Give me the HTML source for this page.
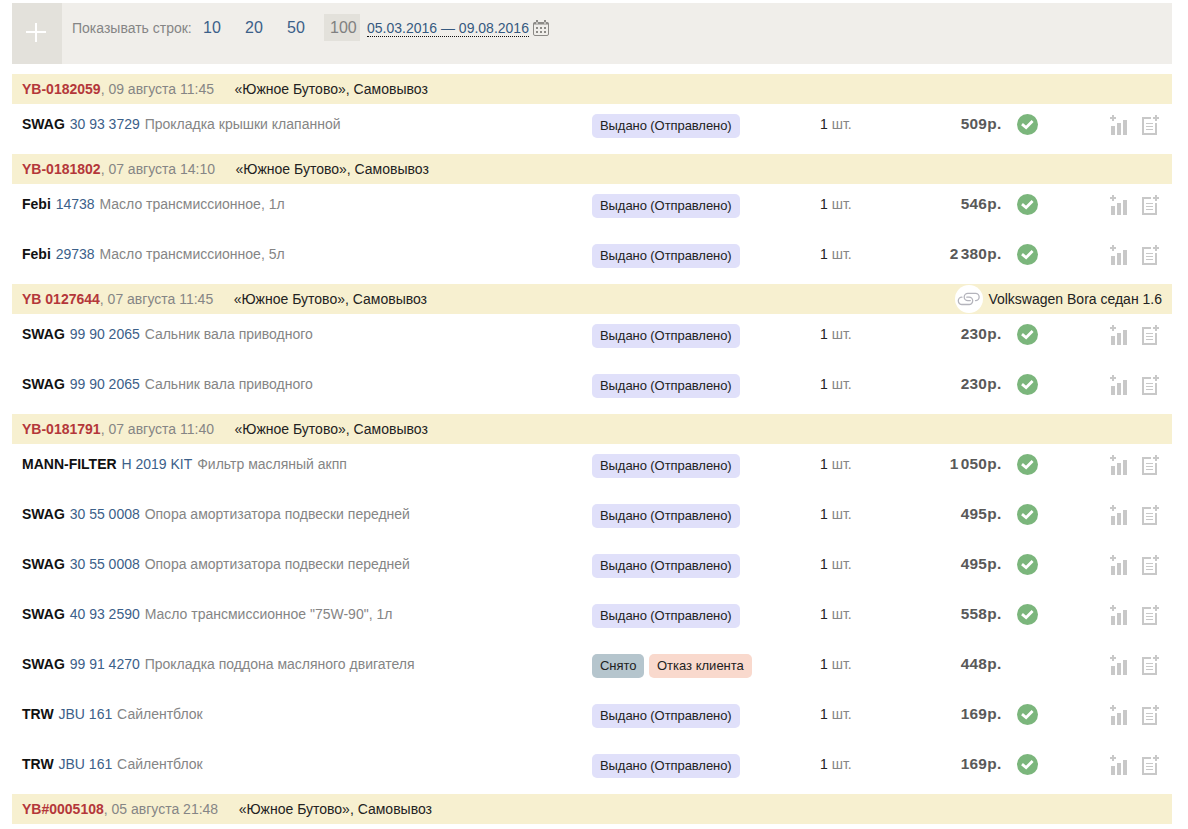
<!DOCTYPE html><html lang="ru"><head><meta charset="utf-8"><title>Заказы</title><style>
*{box-sizing:border-box;margin:0;padding:0}
html,body{width:1188px;height:829px;overflow:hidden;background:#fff}
body{font-family:"Liberation Sans",Arial,sans-serif;font-size:14px;color:#222;position:relative}
.top{position:absolute;left:12px;top:3px;width:1160px;height:61px;background:#f0eeea}
.plus{position:absolute;left:0;top:0;width:50px;height:61px;background:#e3e1db}
.plus:before{content:"";position:absolute;left:14px;top:28px;width:20px;height:2px;background:#fff}
.plus:after{content:"";position:absolute;left:23px;top:20px;width:2px;height:19px;background:#fff}
.top .lbl{position:absolute;left:60px;top:17px;font-size:14px;color:#858585}
.top .n{position:absolute;top:16px;font-size:16px;color:#3b6089}
.top .cur{position:absolute;left:312px;top:11px;width:36px;height:27px;background:#e3e1db}
.top .cur span{position:absolute;left:6px;top:5px;font-size:16px;color:#808080}
.top .dt{position:absolute;left:355px;top:17px;font-size:14px;color:#36597f;border-bottom:1px dotted #111;line-height:16px;white-space:nowrap}
.top svg{position:absolute;left:521px;top:17px}
.g{position:absolute;left:12px;width:1160px;height:30px;background:#f7f0d0;white-space:nowrap}
.g .t{position:absolute;left:10px;top:7px;font-size:14px;color:#858585}
.g .t b{color:#b4373a;font-weight:bold}
.g .t i{font-style:normal;color:#222;margin-left:20.5px}
.g .car{position:absolute;right:10px;top:7px;font-size:14px;color:#222}
.g .lnk{position:absolute;left:943px;top:1px;width:28px;height:28px;border-radius:50%;background:#fff}
.r{position:absolute;left:12px;width:1160px;height:50px;white-space:nowrap}
.r .d{position:absolute;left:10px;top:12px;font-size:14px;color:#858585}
.r .d b{color:#111;font-weight:bold}
.r .d a{color:#3b6089;margin:0 1px}
.bd{position:absolute;top:10px;height:24px;border-radius:5px;font-size:13px;line-height:24px;padding:0 8px;color:#222}
.b1{left:580px;background:#e0e0fa;width:148px;letter-spacing:-0.07px}
.b2{left:580px;background:#b5c5cd;width:51.5px;letter-spacing:-0.07px}
.b3{left:637px;background:#f9d9cd}
.q{position:absolute;left:808px;top:12px;font-size:14px;color:#858585}
.q b{color:#222;font-weight:normal}
.p{position:absolute;right:170.5px;top:10.6px;font-size:15.4px;font-weight:bold;color:#595959;letter-spacing:0.3px;word-spacing:-2.5px}
.ok{position:absolute;left:1005px;top:10px;width:21px;height:21px;border-radius:50%;background:#7bb67c}
.i1{position:absolute;left:1098px;top:11px}
.i2{position:absolute;left:1130px;top:11px}
</style></head><body>
<div class="top"><div class="plus"></div><span class="lbl">Показывать строк:</span><span class="n" style="left:191px">10</span><span class="n" style="left:233px">20</span><span class="n" style="left:275px">50</span><div class="cur"><span>100</span></div><span class="dt">05.03.2016 — 09.08.2016</span><svg width="16" height="16" viewBox="0 0 16 16"><rect x="0.5" y="2.5" width="15" height="13" rx="1.5" fill="none" stroke="#8c8a86"/><g fill="#8c8a86"><rect x="0.5" y="2.5" width="15" height="2"/><rect x="3" y="0" width="2" height="2"/><rect x="11" y="0" width="2" height="2"/><rect x="3" y="7" width="2" height="2"/><rect x="7" y="7" width="2" height="2"/><rect x="11" y="7" width="2" height="2"/><rect x="3" y="11" width="2" height="2"/><rect x="7" y="11" width="2" height="2"/><rect x="11" y="11" width="2" height="2"/></g><g fill="#c4c2be"><rect x="3" y="2" width="2" height="2"/><rect x="11" y="2" width="2" height="2"/></g></svg></div>
<div class="g" style="top:74px"><span class="t"><b>YB-0182059</b>, 09 августа 11:45<i>«Южное Бутово», Самовывоз</i></span></div>
<div class="r" style="top:104px"><span class="d"><b>SWAG</b> <a>30 93 3729</a> Прокладка крышки клапанной</span><span class="bd b1">Выдано (Отправлено)</span><span class="q"><b>1</b> шт.</span><span class="p">509р.</span><svg class="ok" width="21" height="21" viewBox="0 0 21 21"><path d="M5 10.1L9.1 13.5L15.6 7.1" fill="none" stroke="#fff" stroke-width="2.8"/></svg><svg class="i1" width="18" height="21" viewBox="0 0 18 21"><g fill="#c8c8c8"><rect x="1" y="11" width="4" height="9"/><rect x="7" y="8" width="4" height="12"/><rect x="13" y="5" width="4" height="15"/><rect x="0" y="2" width="6" height="2"/><rect x="2" y="0" width="2" height="6"/></g></svg><svg class="i2" width="18" height="21" viewBox="0 0 18 21"><g fill="#c8c8c8"><rect x="0" y="2" width="2" height="18"/><rect x="0" y="2" width="9" height="2"/><rect x="0" y="18" width="15" height="2"/><rect x="13" y="8" width="2" height="12"/><rect x="4" y="8" width="7" height="1"/><rect x="4" y="11" width="7" height="1"/><rect x="4" y="14" width="7" height="1"/><rect x="11" y="2" width="6" height="2"/><rect x="13" y="0" width="2" height="6"/></g></svg></div>
<div class="g" style="top:154px"><span class="t"><b>YB-0181802</b>, 07 августа 14:10<i>«Южное Бутово», Самовывоз</i></span></div>
<div class="r" style="top:184px"><span class="d"><b>Febi</b> <a>14738</a> Масло трансмиссионное, 1л</span><span class="bd b1">Выдано (Отправлено)</span><span class="q"><b>1</b> шт.</span><span class="p">546р.</span><svg class="ok" width="21" height="21" viewBox="0 0 21 21"><path d="M5 10.1L9.1 13.5L15.6 7.1" fill="none" stroke="#fff" stroke-width="2.8"/></svg><svg class="i1" width="18" height="21" viewBox="0 0 18 21"><g fill="#c8c8c8"><rect x="1" y="11" width="4" height="9"/><rect x="7" y="8" width="4" height="12"/><rect x="13" y="5" width="4" height="15"/><rect x="0" y="2" width="6" height="2"/><rect x="2" y="0" width="2" height="6"/></g></svg><svg class="i2" width="18" height="21" viewBox="0 0 18 21"><g fill="#c8c8c8"><rect x="0" y="2" width="2" height="18"/><rect x="0" y="2" width="9" height="2"/><rect x="0" y="18" width="15" height="2"/><rect x="13" y="8" width="2" height="12"/><rect x="4" y="8" width="7" height="1"/><rect x="4" y="11" width="7" height="1"/><rect x="4" y="14" width="7" height="1"/><rect x="11" y="2" width="6" height="2"/><rect x="13" y="0" width="2" height="6"/></g></svg></div>
<div class="r" style="top:234px"><span class="d"><b>Febi</b> <a>29738</a> Масло трансмиссионное, 5л</span><span class="bd b1">Выдано (Отправлено)</span><span class="q"><b>1</b> шт.</span><span class="p">2 380р.</span><svg class="ok" width="21" height="21" viewBox="0 0 21 21"><path d="M5 10.1L9.1 13.5L15.6 7.1" fill="none" stroke="#fff" stroke-width="2.8"/></svg><svg class="i1" width="18" height="21" viewBox="0 0 18 21"><g fill="#c8c8c8"><rect x="1" y="11" width="4" height="9"/><rect x="7" y="8" width="4" height="12"/><rect x="13" y="5" width="4" height="15"/><rect x="0" y="2" width="6" height="2"/><rect x="2" y="0" width="2" height="6"/></g></svg><svg class="i2" width="18" height="21" viewBox="0 0 18 21"><g fill="#c8c8c8"><rect x="0" y="2" width="2" height="18"/><rect x="0" y="2" width="9" height="2"/><rect x="0" y="18" width="15" height="2"/><rect x="13" y="8" width="2" height="12"/><rect x="4" y="8" width="7" height="1"/><rect x="4" y="11" width="7" height="1"/><rect x="4" y="14" width="7" height="1"/><rect x="11" y="2" width="6" height="2"/><rect x="13" y="0" width="2" height="6"/></g></svg></div>
<div class="g" style="top:284px"><span class="t"><b>YB 0127644</b>, 07 августа 11:45<i>«Южное Бутово», Самовывоз</i></span><svg class="lnk" width="28" height="28" viewBox="0 0 28 28"><g fill="none" stroke="#b4b4bc" stroke-width="1.3" stroke-linecap="round"><path d="M20.5 15.6A3.65 3.65 0 0 0 20.5 8.3L12.85 8.3A3.65 3.65 0 0 0 12.85 15.6L15.3 15.6"/><path d="M11.8 12.2L14.05 12.2A3.65 3.65 0 0 1 14.05 19.5L6.95 19.5A3.65 3.65 0 0 1 6.95 12.2"/></g></svg><span class="car">Volkswagen Bora седан 1.6</span></div>
<div class="r" style="top:314px"><span class="d"><b>SWAG</b> <a>99 90 2065</a> Сальник вала приводного</span><span class="bd b1">Выдано (Отправлено)</span><span class="q"><b>1</b> шт.</span><span class="p">230р.</span><svg class="ok" width="21" height="21" viewBox="0 0 21 21"><path d="M5 10.1L9.1 13.5L15.6 7.1" fill="none" stroke="#fff" stroke-width="2.8"/></svg><svg class="i1" width="18" height="21" viewBox="0 0 18 21"><g fill="#c8c8c8"><rect x="1" y="11" width="4" height="9"/><rect x="7" y="8" width="4" height="12"/><rect x="13" y="5" width="4" height="15"/><rect x="0" y="2" width="6" height="2"/><rect x="2" y="0" width="2" height="6"/></g></svg><svg class="i2" width="18" height="21" viewBox="0 0 18 21"><g fill="#c8c8c8"><rect x="0" y="2" width="2" height="18"/><rect x="0" y="2" width="9" height="2"/><rect x="0" y="18" width="15" height="2"/><rect x="13" y="8" width="2" height="12"/><rect x="4" y="8" width="7" height="1"/><rect x="4" y="11" width="7" height="1"/><rect x="4" y="14" width="7" height="1"/><rect x="11" y="2" width="6" height="2"/><rect x="13" y="0" width="2" height="6"/></g></svg></div>
<div class="r" style="top:364px"><span class="d"><b>SWAG</b> <a>99 90 2065</a> Сальник вала приводного</span><span class="bd b1">Выдано (Отправлено)</span><span class="q"><b>1</b> шт.</span><span class="p">230р.</span><svg class="ok" width="21" height="21" viewBox="0 0 21 21"><path d="M5 10.1L9.1 13.5L15.6 7.1" fill="none" stroke="#fff" stroke-width="2.8"/></svg><svg class="i1" width="18" height="21" viewBox="0 0 18 21"><g fill="#c8c8c8"><rect x="1" y="11" width="4" height="9"/><rect x="7" y="8" width="4" height="12"/><rect x="13" y="5" width="4" height="15"/><rect x="0" y="2" width="6" height="2"/><rect x="2" y="0" width="2" height="6"/></g></svg><svg class="i2" width="18" height="21" viewBox="0 0 18 21"><g fill="#c8c8c8"><rect x="0" y="2" width="2" height="18"/><rect x="0" y="2" width="9" height="2"/><rect x="0" y="18" width="15" height="2"/><rect x="13" y="8" width="2" height="12"/><rect x="4" y="8" width="7" height="1"/><rect x="4" y="11" width="7" height="1"/><rect x="4" y="14" width="7" height="1"/><rect x="11" y="2" width="6" height="2"/><rect x="13" y="0" width="2" height="6"/></g></svg></div>
<div class="g" style="top:414px"><span class="t"><b>YB-0181791</b>, 07 августа 11:40<i>«Южное Бутово», Самовывоз</i></span></div>
<div class="r" style="top:444px"><span class="d"><b>MANN-FILTER</b> <a>H 2019 KIT</a> Фильтр масляный акпп</span><span class="bd b1">Выдано (Отправлено)</span><span class="q"><b>1</b> шт.</span><span class="p">1 050р.</span><svg class="ok" width="21" height="21" viewBox="0 0 21 21"><path d="M5 10.1L9.1 13.5L15.6 7.1" fill="none" stroke="#fff" stroke-width="2.8"/></svg><svg class="i1" width="18" height="21" viewBox="0 0 18 21"><g fill="#c8c8c8"><rect x="1" y="11" width="4" height="9"/><rect x="7" y="8" width="4" height="12"/><rect x="13" y="5" width="4" height="15"/><rect x="0" y="2" width="6" height="2"/><rect x="2" y="0" width="2" height="6"/></g></svg><svg class="i2" width="18" height="21" viewBox="0 0 18 21"><g fill="#c8c8c8"><rect x="0" y="2" width="2" height="18"/><rect x="0" y="2" width="9" height="2"/><rect x="0" y="18" width="15" height="2"/><rect x="13" y="8" width="2" height="12"/><rect x="4" y="8" width="7" height="1"/><rect x="4" y="11" width="7" height="1"/><rect x="4" y="14" width="7" height="1"/><rect x="11" y="2" width="6" height="2"/><rect x="13" y="0" width="2" height="6"/></g></svg></div>
<div class="r" style="top:494px"><span class="d"><b>SWAG</b> <a>30 55 0008</a> Опора амортизатора подвески передней</span><span class="bd b1">Выдано (Отправлено)</span><span class="q"><b>1</b> шт.</span><span class="p">495р.</span><svg class="ok" width="21" height="21" viewBox="0 0 21 21"><path d="M5 10.1L9.1 13.5L15.6 7.1" fill="none" stroke="#fff" stroke-width="2.8"/></svg><svg class="i1" width="18" height="21" viewBox="0 0 18 21"><g fill="#c8c8c8"><rect x="1" y="11" width="4" height="9"/><rect x="7" y="8" width="4" height="12"/><rect x="13" y="5" width="4" height="15"/><rect x="0" y="2" width="6" height="2"/><rect x="2" y="0" width="2" height="6"/></g></svg><svg class="i2" width="18" height="21" viewBox="0 0 18 21"><g fill="#c8c8c8"><rect x="0" y="2" width="2" height="18"/><rect x="0" y="2" width="9" height="2"/><rect x="0" y="18" width="15" height="2"/><rect x="13" y="8" width="2" height="12"/><rect x="4" y="8" width="7" height="1"/><rect x="4" y="11" width="7" height="1"/><rect x="4" y="14" width="7" height="1"/><rect x="11" y="2" width="6" height="2"/><rect x="13" y="0" width="2" height="6"/></g></svg></div>
<div class="r" style="top:544px"><span class="d"><b>SWAG</b> <a>30 55 0008</a> Опора амортизатора подвески передней</span><span class="bd b1">Выдано (Отправлено)</span><span class="q"><b>1</b> шт.</span><span class="p">495р.</span><svg class="ok" width="21" height="21" viewBox="0 0 21 21"><path d="M5 10.1L9.1 13.5L15.6 7.1" fill="none" stroke="#fff" stroke-width="2.8"/></svg><svg class="i1" width="18" height="21" viewBox="0 0 18 21"><g fill="#c8c8c8"><rect x="1" y="11" width="4" height="9"/><rect x="7" y="8" width="4" height="12"/><rect x="13" y="5" width="4" height="15"/><rect x="0" y="2" width="6" height="2"/><rect x="2" y="0" width="2" height="6"/></g></svg><svg class="i2" width="18" height="21" viewBox="0 0 18 21"><g fill="#c8c8c8"><rect x="0" y="2" width="2" height="18"/><rect x="0" y="2" width="9" height="2"/><rect x="0" y="18" width="15" height="2"/><rect x="13" y="8" width="2" height="12"/><rect x="4" y="8" width="7" height="1"/><rect x="4" y="11" width="7" height="1"/><rect x="4" y="14" width="7" height="1"/><rect x="11" y="2" width="6" height="2"/><rect x="13" y="0" width="2" height="6"/></g></svg></div>
<div class="r" style="top:594px"><span class="d"><b>SWAG</b> <a>40 93 2590</a> Масло трансмиссионное &quot;75W-90&quot;, 1л</span><span class="bd b1">Выдано (Отправлено)</span><span class="q"><b>1</b> шт.</span><span class="p">558р.</span><svg class="ok" width="21" height="21" viewBox="0 0 21 21"><path d="M5 10.1L9.1 13.5L15.6 7.1" fill="none" stroke="#fff" stroke-width="2.8"/></svg><svg class="i1" width="18" height="21" viewBox="0 0 18 21"><g fill="#c8c8c8"><rect x="1" y="11" width="4" height="9"/><rect x="7" y="8" width="4" height="12"/><rect x="13" y="5" width="4" height="15"/><rect x="0" y="2" width="6" height="2"/><rect x="2" y="0" width="2" height="6"/></g></svg><svg class="i2" width="18" height="21" viewBox="0 0 18 21"><g fill="#c8c8c8"><rect x="0" y="2" width="2" height="18"/><rect x="0" y="2" width="9" height="2"/><rect x="0" y="18" width="15" height="2"/><rect x="13" y="8" width="2" height="12"/><rect x="4" y="8" width="7" height="1"/><rect x="4" y="11" width="7" height="1"/><rect x="4" y="14" width="7" height="1"/><rect x="11" y="2" width="6" height="2"/><rect x="13" y="0" width="2" height="6"/></g></svg></div>
<div class="r" style="top:644px"><span class="d"><b>SWAG</b> <a>99 91 4270</a> Прокладка поддона масляного двигателя</span><span class="bd b2">Снято</span><span class="bd b3">Отказ клиента</span><span class="q"><b>1</b> шт.</span><span class="p">448р.</span><svg class="i1" width="18" height="21" viewBox="0 0 18 21"><g fill="#c8c8c8"><rect x="1" y="11" width="4" height="9"/><rect x="7" y="8" width="4" height="12"/><rect x="13" y="5" width="4" height="15"/><rect x="0" y="2" width="6" height="2"/><rect x="2" y="0" width="2" height="6"/></g></svg><svg class="i2" width="18" height="21" viewBox="0 0 18 21"><g fill="#c8c8c8"><rect x="0" y="2" width="2" height="18"/><rect x="0" y="2" width="9" height="2"/><rect x="0" y="18" width="15" height="2"/><rect x="13" y="8" width="2" height="12"/><rect x="4" y="8" width="7" height="1"/><rect x="4" y="11" width="7" height="1"/><rect x="4" y="14" width="7" height="1"/><rect x="11" y="2" width="6" height="2"/><rect x="13" y="0" width="2" height="6"/></g></svg></div>
<div class="r" style="top:694px"><span class="d"><b>TRW</b> <a>JBU 161</a> Сайлентблок</span><span class="bd b1">Выдано (Отправлено)</span><span class="q"><b>1</b> шт.</span><span class="p">169р.</span><svg class="ok" width="21" height="21" viewBox="0 0 21 21"><path d="M5 10.1L9.1 13.5L15.6 7.1" fill="none" stroke="#fff" stroke-width="2.8"/></svg><svg class="i1" width="18" height="21" viewBox="0 0 18 21"><g fill="#c8c8c8"><rect x="1" y="11" width="4" height="9"/><rect x="7" y="8" width="4" height="12"/><rect x="13" y="5" width="4" height="15"/><rect x="0" y="2" width="6" height="2"/><rect x="2" y="0" width="2" height="6"/></g></svg><svg class="i2" width="18" height="21" viewBox="0 0 18 21"><g fill="#c8c8c8"><rect x="0" y="2" width="2" height="18"/><rect x="0" y="2" width="9" height="2"/><rect x="0" y="18" width="15" height="2"/><rect x="13" y="8" width="2" height="12"/><rect x="4" y="8" width="7" height="1"/><rect x="4" y="11" width="7" height="1"/><rect x="4" y="14" width="7" height="1"/><rect x="11" y="2" width="6" height="2"/><rect x="13" y="0" width="2" height="6"/></g></svg></div>
<div class="r" style="top:744px"><span class="d"><b>TRW</b> <a>JBU 161</a> Сайлентблок</span><span class="bd b1">Выдано (Отправлено)</span><span class="q"><b>1</b> шт.</span><span class="p">169р.</span><svg class="ok" width="21" height="21" viewBox="0 0 21 21"><path d="M5 10.1L9.1 13.5L15.6 7.1" fill="none" stroke="#fff" stroke-width="2.8"/></svg><svg class="i1" width="18" height="21" viewBox="0 0 18 21"><g fill="#c8c8c8"><rect x="1" y="11" width="4" height="9"/><rect x="7" y="8" width="4" height="12"/><rect x="13" y="5" width="4" height="15"/><rect x="0" y="2" width="6" height="2"/><rect x="2" y="0" width="2" height="6"/></g></svg><svg class="i2" width="18" height="21" viewBox="0 0 18 21"><g fill="#c8c8c8"><rect x="0" y="2" width="2" height="18"/><rect x="0" y="2" width="9" height="2"/><rect x="0" y="18" width="15" height="2"/><rect x="13" y="8" width="2" height="12"/><rect x="4" y="8" width="7" height="1"/><rect x="4" y="11" width="7" height="1"/><rect x="4" y="14" width="7" height="1"/><rect x="11" y="2" width="6" height="2"/><rect x="13" y="0" width="2" height="6"/></g></svg></div>
<div class="g" style="top:794px"><span class="t"><b>YB#0005108</b>, 05 августа 21:48<i>«Южное Бутово», Самовывоз</i></span></div>
</body></html>
